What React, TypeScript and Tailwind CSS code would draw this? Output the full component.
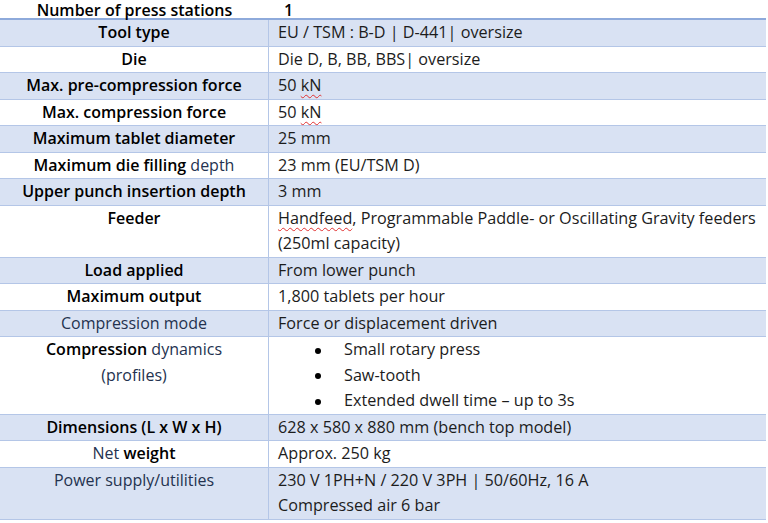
import type { ReactNode } from 'react';

type Spec = {
  label: ReactNode;
  value: ReactNode;
  shade: boolean;
};

// Red spell-check squiggle as Word draws it
function Squiggle({ children }: { children: ReactNode }) {
  return (
    <span className="underline decoration-wavy decoration-[#e03030] decoration-1 underline-offset-[3px]">
      {children}
    </span>
  );
}

function Plain({ children }: { children: ReactNode }) {
  return <span className="font-normal text-[#24324f]">{children}</span>;
}

function Bullets({ items }: { items: string[] }) {
  return (
    <ul>
      {items.map((t) => (
        <li key={t} className="flex items-center">
          <span className="w-[66px] pl-[37px] shrink-0 flex items-center">
            <span className="w-[6px] h-[6px] rounded-full bg-black mt-[2px]" />
          </span>
          <span>{t}</span>
        </li>
      ))}
    </ul>
  );
}

const SPECS: Spec[] = [
  { label: 'Tool type', value: 'EU / TSM : B-D | D-441| oversize', shade: true },
  { label: 'Die', value: 'Die D, B, BB, BBS| oversize', shade: false },
  { label: 'Max. pre-compression force', value: <>50 <Squiggle>kN</Squiggle></>, shade: true },
  { label: 'Max. compression force', value: <>50 <Squiggle>kN</Squiggle></>, shade: false },
  { label: 'Maximum tablet diameter', value: '25 mm', shade: true },
  { label: <>Maximum die filling <Plain>depth</Plain></>, value: '23 mm (EU/TSM D)', shade: false },
  { label: 'Upper punch insertion depth', value: '3 mm', shade: true },
  {
    label: 'Feeder',
    value: (
      <>
        <Squiggle>Handfeed</Squiggle>, Programmable Paddle- or Oscillating Gravity feeders
        <br />
        (250ml capacity)
      </>
    ),
    shade: false,
  },
  { label: 'Load applied', value: 'From lower punch', shade: true },
  { label: 'Maximum output', value: '1,800 tablets per hour', shade: false },
  { label: <Plain>Compression mode</Plain>, value: 'Force or displacement driven', shade: true },
  {
    label: (
      <>
        Compression <Plain>dynamics</Plain>
        <br />
        <Plain>(profiles)</Plain>
      </>
    ),
    value: <Bullets items={['Small rotary press', 'Saw-tooth', 'Extended dwell time – up to 3s']} />,
    shade: false,
  },
  { label: 'Dimensions (L x W x H)', value: '628 x 580 x 880 mm (bench top model)', shade: true },
  { label: <><Plain>Net</Plain> weight</>, value: 'Approx. 250 kg', shade: false },
  {
    label: <Plain>Power supply/utilities</Plain>,
    value: (
      <>
        230 V 1PH+N / 220 V 3PH | 50/60Hz, 16 A
        <br />
        Compressed air 6 bar
      </>
    ),
    shade: true,
  },
];

export default function App() {
  return (
    <div className="w-[768px] h-[523px] bg-white overflow-hidden font-['Open_Sans',sans-serif] text-[16px] text-[#1c1c1c]">
      {/* header line above the table */}
      <div className="flex h-[18px] leading-[18px] pt-[1px]">
        <div className="w-[269px] text-center font-semibold text-black">Number of press stations</div>
        <div className="pl-[15px] font-semibold text-black">1</div>
      </div>

      <div className="w-[766px] border-t-2 border-[#8eaadb]">
        {SPECS.map((s, i) => (
          <div
            key={i}
            className={`flex border-b border-[#b4c6e7] leading-[25.5px] ${s.shade ? 'bg-[#d9e2f3]' : 'bg-white'}`}
          >
            <div className="w-[269px] shrink-0 text-center font-semibold text-black border-r border-[#b4c6e7]">
              {s.label}
            </div>
            <div className="pl-[9px] whitespace-nowrap text-[16.2px]">{s.value}</div>
          </div>
        ))}
      </div>
    </div>
  );
}
